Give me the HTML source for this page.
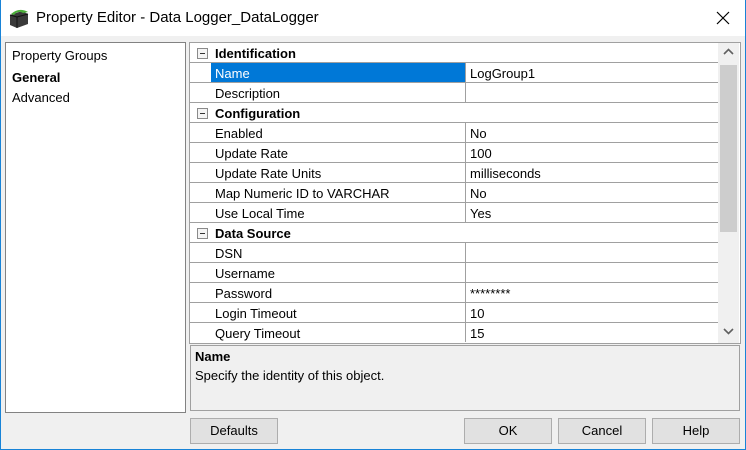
<!DOCTYPE html><html><head><style>
*{margin:0;padding:0;box-sizing:border-box}
body{width:746px;height:450px;background:#f0f0f0;font-family:"Liberation Sans",Arial,sans-serif;font-size:13px;color:#000;position:relative;overflow:hidden}
.abs{position:absolute}
#win{position:absolute;left:0;top:0;width:746px;height:450px;border:1px solid #1883d7;border-top:none}
#title{left:0;top:0;width:746px;height:36px;background:#fff}
.row{position:absolute;left:190px;width:528px;height:20px;border-bottom:1px solid #a0a0a0}
.row .n{position:absolute;left:25px;top:3px}
.row .v{position:absolute;left:275px;top:3px;height:19px;top:0;padding-top:3px;padding-left:4px;border-left:1px solid #a0a0a0;width:253px}
.row.h .n{left:25px;font-weight:bold}
.box{position:absolute;left:7px;top:5px;width:11px;height:11px;border:1px solid #8a8a8a;background:#f4f4f4}
.box:after{content:"";position:absolute;left:2px;top:4px;width:5px;height:1px;background:#333}
.btn{position:absolute;top:418px;height:26px;border:1px solid #adadad;background:#e1e1e1;text-align:center;line-height:24px}
</style></head><body>
<div id="title" class="abs">
<svg class="abs" style="left:8px;top:7px" width="22" height="22"><path d="M2 8 L14 4 L20 7 L20 17 L9 21 L2 18Z" fill="#3a3a3a"/><path d="M2 8 L9 10 L20 7" stroke="#111" fill="none"/><path d="M9 10 L9 21" stroke="#111"/><path d="M3 7 Q11 0 20 5 L15 6 Q10 3 6 8Z" fill="#4caf3a"/></svg>
<div class="abs" style="left:36px;top:9px;font-size:15px">Property Editor - Data Logger_DataLogger</div>
<svg class="abs" style="left:716px;top:11px" width="14" height="14"><path d="M1 1L13 13M13 1L1 13" stroke="#000" stroke-width="1.2"/></svg>
</div>
<div class="abs" style="left:5px;top:42px;width:181px;height:371px;border:1px solid #828282;background:#fff">
<div class="abs" style="left:6px;top:5px">Property Groups</div>
<div class="abs" style="left:6px;top:27px;font-weight:bold">General</div>
<div class="abs" style="left:6px;top:47px">Advanced</div>
</div>
<div class="abs" style="left:189px;top:42px;width:552px;height:302px;border:1px solid #a0a0a0;background:#fff;overflow:hidden">
</div>
<div style="position:absolute;left:0;top:43px">
<div class="row h" style="top:0"><div class="box"></div><div class="n">Identification</div></div>
<div class="row" style="top:20px"><div class="abs" style="left:21px;top:0;width:254px;height:19px;background:#0078d7"></div><div class="n" style="color:#fff">Name</div><div class="v">LogGroup1</div></div>
<div class="row" style="top:40px"><div class="n">Description</div><div class="v"></div></div>
<div class="row h" style="top:60px"><div class="box"></div><div class="n">Configuration</div></div>
<div class="row" style="top:80px"><div class="n">Enabled</div><div class="v">No</div></div>
<div class="row" style="top:100px"><div class="n">Update Rate</div><div class="v">100</div></div>
<div class="row" style="top:120px"><div class="n">Update Rate Units</div><div class="v">milliseconds</div></div>
<div class="row" style="top:140px"><div class="n">Map Numeric ID to VARCHAR</div><div class="v">No</div></div>
<div class="row" style="top:160px"><div class="n">Use Local Time</div><div class="v">Yes</div></div>
<div class="row h" style="top:180px"><div class="box"></div><div class="n">Data Source</div></div>
<div class="row" style="top:200px"><div class="n">DSN</div><div class="v"></div></div>
<div class="row" style="top:220px"><div class="n">Username</div><div class="v"></div></div>
<div class="row" style="top:240px"><div class="n">Password</div><div class="v">********</div></div>
<div class="row" style="top:260px"><div class="n">Login Timeout</div><div class="v">10</div></div>
<div class="row" style="top:280px;border-bottom:none"><div class="n">Query Timeout</div><div class="v">15</div></div>
</div>
<div class="abs" style="left:718px;top:43px;width:21px;height:300px;background:#f0f0f0">
<div class="abs" style="left:2px;top:22px;width:17px;height:167px;background:#cdcdcd"></div>
<svg class="abs" style="left:5px;top:5px" width="11" height="8"><path d="M1 6L5.5 1.5L10 6" stroke="#606060" stroke-width="1.6" fill="none"/></svg>
<svg class="abs" style="left:5px;top:284px" width="11" height="8"><path d="M1 2L5.5 6.5L10 2" stroke="#606060" stroke-width="1.6" fill="none"/></svg>
</div>
<div class="abs" style="left:190px;top:345px;width:550px;height:66px;border:1px solid #a0a0a0;background:#f0f0f0">
<div class="abs" style="left:4px;top:3px;font-weight:bold">Name</div>
<div class="abs" style="left:4px;top:22px">Specify the identity of this object.</div>
</div>
<div class="btn" style="left:190px;width:88px">Defaults</div>
<div class="btn" style="left:464px;width:88px">OK</div>
<div class="btn" style="left:558px;width:88px">Cancel</div>
<div class="btn" style="left:652px;width:88px">Help</div>
<div id="win"></div>
</body></html>
